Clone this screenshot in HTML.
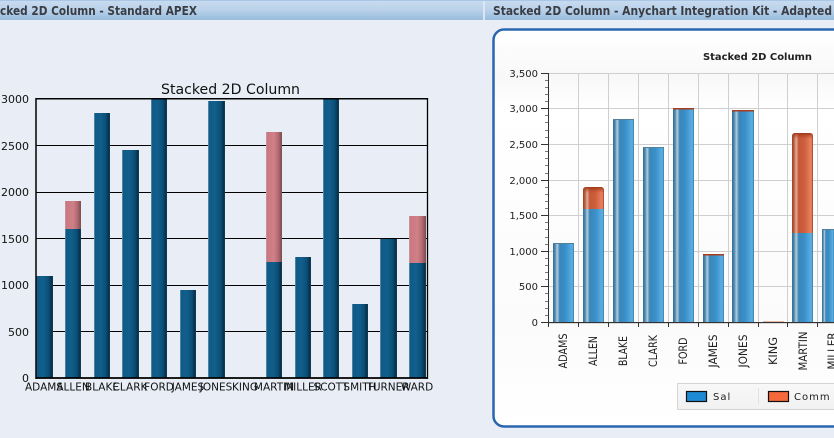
<!DOCTYPE html>
<html><head><meta charset="utf-8"><style>
html,body{margin:0;padding:0;background:#e9eef6;width:834px;height:438px;overflow:hidden}
svg{display:block}
text{font-family:"DejaVu Sans","Liberation Sans",sans-serif}
</style></head><body>
<svg width="834" height="438" viewBox="0 0 834 438" xmlns="http://www.w3.org/2000/svg">
<defs>
<linearGradient id="hd" x1="0" y1="0" x2="0" y2="1"><stop offset="0" stop-color="#c9dcf0"/><stop offset=".5" stop-color="#bad2ea"/><stop offset="1" stop-color="#96bbdd"/></linearGradient>
<linearGradient id="lb" x1="0" y1="0" x2="1" y2="0"><stop offset="0" stop-color="#7fa3bb"/><stop offset=".07" stop-color="#0f5a86"/><stop offset=".4" stop-color="#125f8c"/><stop offset=".72" stop-color="#0b5179"/><stop offset=".96" stop-color="#052c44"/><stop offset="1" stop-color="#2d5873"/></linearGradient>
<linearGradient id="lp" x1="0" y1="0" x2="1" y2="0"><stop offset="0" stop-color="#c3a0a8"/><stop offset=".08" stop-color="#cb777f"/><stop offset=".5" stop-color="#d08087"/><stop offset=".75" stop-color="#b56c73"/><stop offset="1" stop-color="#7c4a4f"/></linearGradient>
<linearGradient id="rb" x1="0" y1="0" x2="1" y2="0"><stop offset="0" stop-color="#2f6f9a"/><stop offset=".1" stop-color="#4f88ad"/><stop offset=".2" stop-color="#b4ccdc"/><stop offset=".32" stop-color="#3a86b8"/><stop offset=".6" stop-color="#3a90ca"/><stop offset=".92" stop-color="#5db0e4"/><stop offset="1" stop-color="#357aa8"/></linearGradient>
<linearGradient id="rc" x1="0" y1="0" x2="1" y2="0"><stop offset="0" stop-color="#9c3f22"/><stop offset=".1" stop-color="#bd6245"/><stop offset=".2" stop-color="#e2ac98"/><stop offset=".32" stop-color="#c5573a"/><stop offset=".6" stop-color="#cf5f3c"/><stop offset=".92" stop-color="#ea8462"/><stop offset="1" stop-color="#9c3f22"/></linearGradient>
<linearGradient id="top" x1="0" y1="0" x2="0" y2="1"><stop offset="0" stop-color="#9a3512" stop-opacity=".95"/><stop offset="1" stop-color="#b5482a" stop-opacity="0"/></linearGradient>
<linearGradient id="card" x1="0" y1="0" x2="0" y2="1"><stop offset="0" stop-color="#ffffff"/><stop offset=".12" stop-color="#f8f8f8"/><stop offset=".2" stop-color="#ffffff"/><stop offset=".75" stop-color="#fbfbfb"/><stop offset="1" stop-color="#ffffff"/></linearGradient>
<linearGradient id="leg" x1="0" y1="0" x2="0" y2="1"><stop offset="0" stop-color="#f8f8f8"/><stop offset="1" stop-color="#f1f1f1"/></linearGradient>
</defs>

<rect width="834" height="438" fill="#e9eef6"/>
<!-- headers -->
<rect x="0" y="0" width="483" height="20" fill="url(#hd)"/>
<rect x="485" y="0" width="349" height="20" fill="url(#hd)"/>
<rect x="483" y="0" width="2" height="20" fill="#dce6f2"/>
<rect x="0" y="0" width="834" height="1" fill="#a9c6e4"/>
<rect x="0" y="19" width="483" height="1" fill="#9dbddd"/>
<rect x="485" y="19" width="349" height="1" fill="#9dbddd"/>
<text x="197" y="15" text-anchor="end" font-size="12" font-weight="700" fill="#3a3d44" textLength="197" lengthAdjust="spacingAndGlyphs">cked 2D Column - Standard APEX</text>
<text x="493" y="15" font-size="12" font-weight="700" fill="#3a3d44" textLength="339" lengthAdjust="spacingAndGlyphs">Stacked 2D Column - Anychart Integration Kit - Adapted</text>

<!-- LEFT CHART -->
<text x="230.500" y="94" text-anchor="middle" font-size="14" fill="#111" textLength="139" lengthAdjust="spacingAndGlyphs">Stacked 2D Column</text>
<g fill="#111" font-size="11" text-anchor="end">
<text x="29" y="103">3000</text><text x="29" y="150">2500</text><text x="29" y="196">2000</text><text x="29" y="243">1500</text><text x="29" y="289">1000</text><text x="29" y="336">500</text><text x="29" y="382">0</text>
</g>
<g stroke="#000" stroke-width="1">
<line x1="36" x2="427" y1="145.500" y2="145.500"/><line x1="36" x2="427" y1="192.500" y2="192.500"/><line x1="36" x2="427" y1="238.500" y2="238.500"/><line x1="36" x2="427" y1="285.500" y2="285.500"/><line x1="36" x2="427" y1="331.500" y2="331.500"/>
</g>
<g>
<rect x="36" y="276" width="17" height="102" fill="url(#lb)"/>
<rect x="65" y="229" width="16" height="149" fill="url(#lb)"/><rect x="65" y="201" width="16" height="28" fill="url(#lp)"/>
<rect x="94" y="113" width="16" height="265" fill="url(#lb)"/>
<rect x="122" y="150" width="17" height="228" fill="url(#lb)"/>
<rect x="151" y="99" width="16" height="279" fill="url(#lb)"/>
<rect x="180" y="290" width="16" height="88" fill="url(#lb)"/>
<rect x="208" y="101" width="17" height="277" fill="url(#lb)"/>
<rect x="266" y="262" width="16" height="116" fill="url(#lb)"/><rect x="266" y="132" width="16" height="130" fill="url(#lp)"/>
<rect x="295" y="257" width="16" height="121" fill="url(#lb)"/>
<rect x="323" y="99" width="16" height="279" fill="url(#lb)"/>
<rect x="352" y="304" width="16" height="74" fill="url(#lb)"/>
<rect x="380" y="239" width="17" height="139" fill="url(#lb)"/>
<rect x="409" y="263" width="17" height="115" fill="url(#lb)"/><rect x="409" y="216" width="17" height="47" fill="url(#lp)"/>
</g>
<line x1="36" x2="428" y1="98.800" y2="98.800" stroke="#000" stroke-width="1.500"/>
<line x1="36" x2="36" y1="98" y2="379" stroke="#000" stroke-width="1.500"/>
<line x1="427.500" x2="427.500" y1="98" y2="379" stroke="#000" stroke-width="1.300"/>
<line x1="36" x2="428" y1="378" y2="378" stroke="#000" stroke-width="1.800"/>
<g fill="#111" font-size="10.500" text-anchor="middle">
<text x="44" y="390.500">ADAMS</text><text x="73" y="390.500">ALLEN</text><text x="102" y="390.500">BLAKE</text><text x="130" y="390.500">CLARK</text><text x="159" y="390.500">FORD</text><text x="188" y="390.500">JAMES</text><text x="216" y="390.500">JONES</text><text x="245" y="390.500">KING</text><text x="274" y="390.500">MARTIN</text><text x="303" y="390.500">MILLER</text><text x="331" y="390.500">SCOTT</text><text x="360" y="390.500">SMITH</text><text x="388" y="390.500">TURNER</text><text x="417" y="390.500">WARD</text>
</g>

<!-- RIGHT CARD -->
<path d="M845 29.500H504a10.500 10.500 0 0 0-10.500 10.500V416a10.500 10.500 0 0 0 10.500 10.500H845Z" fill="url(#card)" stroke="#2a66ae" stroke-width="2.500"/>
<text x="757.500" y="60" text-anchor="middle" font-size="10" font-weight="700" fill="#222" textLength="109" lengthAdjust="spacingAndGlyphs">Stacked 2D Column</text>

<g stroke="#cfcfcf" stroke-width="1">
<line x1="548" x2="834" y1="73.500" y2="73.500"/><line x1="548" x2="834" y1="108.500" y2="108.500"/><line x1="548" x2="834" y1="144.500" y2="144.500"/><line x1="548" x2="834" y1="180.500" y2="180.500"/><line x1="548" x2="834" y1="215.500" y2="215.500"/><line x1="548" x2="834" y1="251.500" y2="251.500"/><line x1="548" x2="834" y1="286.500" y2="286.500"/>
<line x1="578.500" x2="578.500" y1="73" y2="322"/><line x1="608.500" x2="608.500" y1="73" y2="322"/><line x1="638.500" x2="638.500" y1="73" y2="322"/><line x1="668.500" x2="668.500" y1="73" y2="322"/><line x1="698.500" x2="698.500" y1="73" y2="322"/><line x1="728.500" x2="728.500" y1="73" y2="322"/><line x1="758.500" x2="758.500" y1="73" y2="322"/><line x1="787.500" x2="787.500" y1="73" y2="322"/><line x1="817.500" x2="817.500" y1="73" y2="322"/>
</g>
<!-- bars -->
<g>
<rect x="553" y="244" width="21" height="78" fill="url(#rb)"/>
<rect x="583" y="209" width="21" height="113" fill="url(#rb)"/><path d="M583 209V190a3 3 0 0 1 3-3h15a3 3 0 0 1 3 3v19Z" fill="url(#rc)"/><path d="M583 190a3 3 0 0 1 3-3h15a3 3 0 0 1 3 3v3h-21Z" fill="url(#top)"/>
<rect x="613" y="119" width="21" height="203" fill="url(#rb)"/>
<rect x="643" y="147" width="21" height="175" fill="url(#rb)"/>
<rect x="673" y="109" width="21" height="213" fill="url(#rb)"/><rect x="673" y="108" width="21" height="1.500" fill="#a83c1e"/>
<rect x="703" y="255" width="21" height="67" fill="url(#rb)"/><rect x="703" y="254" width="21" height="1.500" fill="#a83c1e"/>
<rect x="732" y="111" width="22" height="211" fill="url(#rb)"/><rect x="732" y="110" width="22" height="1.500" fill="#a83c1e"/>
<rect x="763" y="321" width="21" height="1" fill="#e6b5a3"/>
<rect x="792" y="233" width="21" height="89" fill="url(#rb)"/><path d="M792 233V136a3 3 0 0 1 3-3h15a3 3 0 0 1 3 3v97Z" fill="url(#rc)"/><path d="M792 136a3 3 0 0 1 3-3h15a3 3 0 0 1 3 3v3h-21Z" fill="url(#top)"/>
<rect x="822" y="229" width="12" height="93" fill="url(#rb)"/>
<rect x="553" y="243" width="21" height="1" fill="#55809c"/><rect x="613" y="119" width="21" height="1" fill="#55809c"/><rect x="643" y="147" width="21" height="1" fill="#55809c"/><rect x="822" y="229" width="12" height="1" fill="#55809c"/>
</g>
<rect x="548" y="322" width="286" height="2" fill="#d9d9d9"/>
<!-- axes -->
<g stroke="#333" stroke-width="1">
<line x1="548.500" x2="548.500" y1="73" y2="322.500"/>
<line x1="548" x2="834" y1="322.500" y2="322.500"/>
<line x1="541" x2="548" y1="73.500" y2="73.500"/><line x1="541" x2="548" y1="108.500" y2="108.500"/><line x1="541" x2="548" y1="144.500" y2="144.500"/><line x1="541" x2="548" y1="180.500" y2="180.500"/><line x1="541" x2="548" y1="215.500" y2="215.500"/><line x1="541" x2="548" y1="251.500" y2="251.500"/><line x1="541" x2="548" y1="286.500" y2="286.500"/><line x1="541" x2="548" y1="322.500" y2="322.500"/>
<line x1="548.500" x2="548.500" y1="322" y2="327"/><line x1="578.500" x2="578.500" y1="322" y2="327"/><line x1="608.500" x2="608.500" y1="322" y2="327"/><line x1="638.500" x2="638.500" y1="322" y2="327"/><line x1="668.500" x2="668.500" y1="322" y2="327"/><line x1="698.500" x2="698.500" y1="322" y2="327"/><line x1="728.500" x2="728.500" y1="322" y2="327"/><line x1="758.500" x2="758.500" y1="322" y2="327"/><line x1="787.500" x2="787.500" y1="322" y2="327"/><line x1="817.500" x2="817.500" y1="322" y2="327"/>
</g>
<path stroke="#777" stroke-width="1" fill="none" d="M545 80.500h3M545 87.500h3M545 94.500h3M545 101.500h3M545 115.500h3M545 122.500h3M545 130.500h3M545 137.500h3M545 151.500h3M545 158.500h3M545 165.500h3M545 173.500h3M545 187.500h3M545 194.500h3M545 201.500h3M545 208.500h3M545 222.500h3M545 229.500h3M545 237.500h3M545 244.500h3M545 258.500h3M545 265.500h3M545 272.500h3M545 279.500h3M545 293.500h3M545 301.500h3M545 308.500h3M545 315.500h3"/>
<g fill="#222" font-size="10" text-anchor="end">
<text x="538" y="77">3,500</text><text x="538" y="112">3,000</text><text x="538" y="148">2,500</text><text x="538" y="184">2,000</text><text x="538" y="219">1,500</text><text x="538" y="255">1,000</text><text x="538" y="290">500</text><text x="538" y="326">0</text>
</g>
<g fill="#222" font-size="11.500" text-anchor="middle" style="font-family:'Liberation Sans',sans-serif">
<text transform="translate(567,351) rotate(-90)" textLength="35" lengthAdjust="spacingAndGlyphs">ADAMS</text>
<text transform="translate(597,351) rotate(-90)" textLength="30" lengthAdjust="spacingAndGlyphs">ALLEN</text>
<text transform="translate(627,351) rotate(-90)" textLength="30" lengthAdjust="spacingAndGlyphs">BLAKE</text>
<text transform="translate(657,351) rotate(-90)" textLength="32" lengthAdjust="spacingAndGlyphs">CLARK</text>
<text transform="translate(687,351) rotate(-90)" textLength="27" lengthAdjust="spacingAndGlyphs">FORD</text>
<text transform="translate(717,351) rotate(-90)" textLength="33" lengthAdjust="spacingAndGlyphs">JAMES</text>
<text transform="translate(747,351) rotate(-90)" textLength="33" lengthAdjust="spacingAndGlyphs">JONES</text>
<text transform="translate(777,351) rotate(-90)" textLength="28" lengthAdjust="spacingAndGlyphs">KING</text>
<text transform="translate(807,351) rotate(-90)" textLength="39" lengthAdjust="spacingAndGlyphs">MARTIN</text>
<text transform="translate(836,351) rotate(-90)" textLength="37" lengthAdjust="spacingAndGlyphs">MILLER</text>
</g>
<!-- legend -->
<rect x="677.500" y="383.500" width="170" height="26" fill="url(#leg)" stroke="#d4d4d4"/>
<rect x="686.500" y="391.500" width="20" height="10" fill="#1f8ad4" stroke="#111" stroke-width="1.200"/>
<text x="713" y="400" font-size="10" fill="#222" letter-spacing="1">Sal</text>
<line x1="758.500" x2="758.500" y1="388" y2="404" stroke="#e2e2e2"/>
<rect x="768.500" y="391.500" width="20" height="10" fill="#f4683a" stroke="#111" stroke-width="1.200"/>
<text x="794" y="400" font-size="10" fill="#222" letter-spacing="1">Comm</text>
</svg>
</body></html>
